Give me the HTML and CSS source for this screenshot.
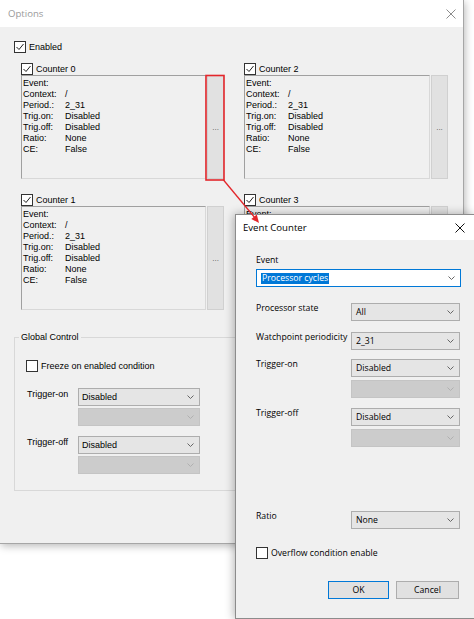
FILE: index.html
```html
<!DOCTYPE html>
<html>
<head>
<meta charset="utf-8">
<link rel="stylesheet" href="styles.css">
</head>
<body>
<div class="desk">
  <div class="win win-options">
    <div class="titlebar">
      <span class="title inactive">Options</span>
      <svg class="close" width="10" height="10" viewBox="0 0 10 10"><path d="M0.5 0.5 L9.5 9.5 M9.5 0.5 L0.5 9.5" stroke="#8c8c8c" stroke-width="1" fill="none"/></svg>
    </div>
    <div class="opt-body">
      <div class="chk"><span class="box"><svg width="10" height="10" viewBox="0 0 10 10"><polyline points="1.5,5 4,7.5 8.5,2" fill="none" stroke="#222" stroke-width="1"/></svg></span><span>Enabled</span></div>

      <div class="counters">
        <div class="counter">
          <div class="chk"><span class="box"><svg width="10" height="10" viewBox="0 0 10 10"><polyline points="1.5,5 4,7.5 8.5,2" fill="none" stroke="#222" stroke-width="1"/></svg></span><span>Counter 0</span></div>
          <div class="counter-body">
            <div class="info">
              <span>Event:</span><span></span>
              <span>Context:</span><span>/</span>
              <span>Period.:</span><span>2_31</span>
              <span>Trig.on:</span><span>Disabled</span>
              <span>Trig.off:</span><span>Disabled</span>
              <span>Ratio:</span><span>None</span>
              <span>CE:</span><span>False</span>
            </div>
            <div class="dots">...</div>
          </div>
        </div>
        <div class="counter">
          <div class="chk"><span class="box"><svg width="10" height="10" viewBox="0 0 10 10"><polyline points="1.5,5 4,7.5 8.5,2" fill="none" stroke="#222" stroke-width="1"/></svg></span><span>Counter 2</span></div>
          <div class="counter-body">
            <div class="info">
              <span>Event:</span><span></span>
              <span>Context:</span><span>/</span>
              <span>Period.:</span><span>2_31</span>
              <span>Trig.on:</span><span>Disabled</span>
              <span>Trig.off:</span><span>Disabled</span>
              <span>Ratio:</span><span>None</span>
              <span>CE:</span><span>False</span>
            </div>
            <div class="dots">...</div>
          </div>
        </div>
        <div class="counter">
          <div class="chk"><span class="box"><svg width="10" height="10" viewBox="0 0 10 10"><polyline points="1.5,5 4,7.5 8.5,2" fill="none" stroke="#222" stroke-width="1"/></svg></span><span>Counter 1</span></div>
          <div class="counter-body">
            <div class="info">
              <span>Event:</span><span></span>
              <span>Context:</span><span>/</span>
              <span>Period.:</span><span>2_31</span>
              <span>Trig.on:</span><span>Disabled</span>
              <span>Trig.off:</span><span>Disabled</span>
              <span>Ratio:</span><span>None</span>
              <span>CE:</span><span>False</span>
            </div>
            <div class="dots">...</div>
          </div>
        </div>
        <div class="counter">
          <div class="chk"><span class="box"><svg width="10" height="10" viewBox="0 0 10 10"><polyline points="1.5,5 4,7.5 8.5,2" fill="none" stroke="#222" stroke-width="1"/></svg></span><span>Counter 3</span></div>
          <div class="counter-body">
            <div class="info">
              <span>Event:</span><span></span>
            </div>
            <div class="dots"></div>
          </div>
        </div>
      </div>

      <fieldset class="group">
        <legend>Global Control</legend>
        <div class="chk"><span class="box"></span><span>Freeze on enabled condition</span></div>
        <div class="trig-grid">
          <span class="lbl">Trigger-on</span>
          <div class="stack">
            <div class="select"><span>Disabled</span><svg width="7" height="4" viewBox="0 0 7 4"><polyline points="0.5,0.5 3.5,3.5 6.5,0.5" fill="none" stroke="#666" stroke-width="1"/></svg></div>
            <div class="select disabled"><span></span><svg width="7" height="4" viewBox="0 0 7 4"><polyline points="0.5,0.5 3.5,3.5 6.5,0.5" fill="none" stroke="#b0b0b0" stroke-width="1"/></svg></div>
          </div>
          <span class="lbl">Trigger-off</span>
          <div class="stack">
            <div class="select"><span>Disabled</span><svg width="7" height="4" viewBox="0 0 7 4"><polyline points="0.5,0.5 3.5,3.5 6.5,0.5" fill="none" stroke="#666" stroke-width="1"/></svg></div>
            <div class="select disabled"><span></span><svg width="7" height="4" viewBox="0 0 7 4"><polyline points="0.5,0.5 3.5,3.5 6.5,0.5" fill="none" stroke="#b0b0b0" stroke-width="1"/></svg></div>
          </div>
        </div>
      </fieldset>
    </div>
  </div>

  <div class="win win-dialog">
    <div class="titlebar dlg-title">
      <span class="title">Event Counter</span>
      <svg class="close" width="10" height="10" viewBox="0 0 10 10"><path d="M0.5 0.5 L9.5 9.5 M9.5 0.5 L0.5 9.5" stroke="#111" stroke-width="1" fill="none"/></svg>
    </div>
    <div class="dlg-body">
      <span class="dlbl">Event</span>
      <div class="select focus event-sel"><span class="hl">Processor cycles</span><svg width="7" height="4" viewBox="0 0 7 4"><polyline points="0.5,0.5 3.5,3.5 6.5,0.5" fill="none" stroke="#666" stroke-width="1"/></svg></div>

      <div class="drow r-proc">
        <span class="dlbl">Processor state</span>
        <div class="stack"><div class="select"><span>All</span><svg width="7" height="4" viewBox="0 0 7 4"><polyline points="0.5,0.5 3.5,3.5 6.5,0.5" fill="none" stroke="#666" stroke-width="1"/></svg></div></div>
      </div>
      <div class="drow r-watch">
        <span class="dlbl">Watchpoint periodicity</span>
        <div class="stack"><div class="select"><span>2_31</span><svg width="7" height="4" viewBox="0 0 7 4"><polyline points="0.5,0.5 3.5,3.5 6.5,0.5" fill="none" stroke="#666" stroke-width="1"/></svg></div></div>
      </div>
      <div class="drow r-ton">
        <span class="dlbl">Trigger-on</span>
        <div class="stack dstack">
          <div class="select"><span>Disabled</span><svg width="7" height="4" viewBox="0 0 7 4"><polyline points="0.5,0.5 3.5,3.5 6.5,0.5" fill="none" stroke="#666" stroke-width="1"/></svg></div>
          <div class="select disabled"><span></span><svg width="7" height="4" viewBox="0 0 7 4"><polyline points="0.5,0.5 3.5,3.5 6.5,0.5" fill="none" stroke="#b0b0b0" stroke-width="1"/></svg></div>
        </div>
      </div>
      <div class="drow r-toff">
        <span class="dlbl">Trigger-off</span>
        <div class="stack dstack">
          <div class="select"><span>Disabled</span><svg width="7" height="4" viewBox="0 0 7 4"><polyline points="0.5,0.5 3.5,3.5 6.5,0.5" fill="none" stroke="#666" stroke-width="1"/></svg></div>
          <div class="select disabled"><span></span><svg width="7" height="4" viewBox="0 0 7 4"><polyline points="0.5,0.5 3.5,3.5 6.5,0.5" fill="none" stroke="#b0b0b0" stroke-width="1"/></svg></div>
        </div>
      </div>
      <div class="drow r-ratio">
        <span class="dlbl">Ratio</span>
        <div class="stack"><div class="select"><span>None</span><svg width="7" height="4" viewBox="0 0 7 4"><polyline points="0.5,0.5 3.5,3.5 6.5,0.5" fill="none" stroke="#666" stroke-width="1"/></svg></div></div>
      </div>

      <div class="chk dchk"><span class="box"></span><span>Overflow condition enable</span></div>

      <div class="buttons">
        <div class="btn default">OK</div>
        <div class="btn">Cancel</div>
      </div>
    </div>
  </div>

  <svg class="annot" width="474" height="619" viewBox="0 0 474 619">
    <rect x="206" y="75.5" width="18" height="104.5" fill="none" stroke="#e3262b" stroke-width="1.6"/>
    <line x1="223.5" y1="180" x2="255.5" y2="218.5" stroke="#e3262b" stroke-width="1.3"/>
    <polygon points="259,223 251.3,218.9 256.8,214.5" fill="#e3262b"/>
  </svg>
</div>
</body>
</html>
```

FILE: styles.css
```css
html, body {
  margin: 0;
  padding: 0;
}
body {
  width: 474px;
  height: 619px;
  overflow: hidden;
  background: #ffffff;
  font-family: "Liberation Sans", Arial, sans-serif;
  font-size: 9px;
  color: #000;
}
.desk {
  position: relative;
  width: 474px;
  height: 619px;
  overflow: hidden;
}
.win {
  position: absolute;
  background: #f0f0f0;
  box-sizing: border-box;
}
.win-options {
  left: 0;
  top: 0;
  width: 464px;
  height: 544px;
  border-right: 1px solid #a6a6a6;
  border-bottom: 1px solid #a6a6a6;
  box-shadow: 1px 2px 8px rgba(0, 0, 0, 0.28);
}
.titlebar {
  background: #ffffff;
  display: flex;
  align-items: center;
  justify-content: space-between;
  box-sizing: border-box;
}
.win-options .titlebar {
  height: 27px;
  padding: 0 7px 0 8px;
}
.title {
  font-family: "Open Sans", "Noto Sans", sans-serif;
  font-size: 9.6px;
  color: #000;
}
.title.inactive {
  color: #9a9a9a;
}
.close {
  display: block;
}

/* options body */
.opt-body {
  padding: 14px 0 0 14px;
}
.chk {
  display: flex;
  align-items: center;
  gap: 3px;
  height: 12px;
}
.box {
  width: 12px;
  height: 12px;
  box-sizing: border-box;
  border: 1px solid #333333;
  background: #ffffff;
  display: flex;
  align-items: center;
  justify-content: center;
  flex: none;
}
.counters {
  margin: 10px 0 0 7px;
  display: grid;
  grid-template-columns: 203px 205px;
  column-gap: 20px;
  row-gap: 15px;
}
.counter-body {
  display: flex;
  gap: 1px;
  height: 104px;
}
.info {
  width: 186px;
  box-sizing: border-box;
  border: 1px solid #a0a0a0;
  border-right-color: #d8d8d8;
  border-bottom-color: #d8d8d8;
  background: #f0f0f0;
  padding: 2px 0 0 1px;
  display: grid;
  grid-template-columns: 42px 1fr;
  grid-auto-rows: 11px;
  line-height: 11px;
  align-content: start;
}
.dots {
  width: 17px;
  box-sizing: border-box;
  background: #e1e1e1;
  border: 1px solid #d0d0d0;
  display: flex;
  align-items: center;
  justify-content: center;
  color: #555;
  font-size: 8px;
}

/* group */
.group {
  margin: 21px 0 0 0;
  width: 436px;
  height: 160px;
  box-sizing: border-box;
  border: 1px solid #d8d8d8;
  padding: 17px 0 0 11px;
}
.group legend {
  padding: 0 2px;
  margin-left: -7px;
  line-height: 12px;
  font-size: 9px;
}
.trig-grid {
  margin-top: 16px;
  display: grid;
  grid-template-columns: 52px 122px;
  row-gap: 10px;
  align-items: start;
}
.lbl {
  line-height: 12px;
  padding-left: 1px;
}
.stack {
  display: flex;
  flex-direction: column;
  gap: 2px;
}
.select {
  height: 18px;
  box-sizing: border-box;
  border: 1px solid #adadad;
  background: #e5e5e5;
  display: flex;
  align-items: center;
  justify-content: space-between;
  padding: 0 5px 0 3px;
}
.select svg {
  display: block;
  flex: none;
}
.select.disabled {
  background: #cccccc;
  border-color: #c4c4c4;
}

/* dialog */
.win-dialog {
  left: 235px;
  top: 214px;
  width: 239px;
  height: 405px;
  border: 1px solid #8c8c8c;
  border-right: none;
  box-shadow: -1px 0 9px rgba(0, 0, 0, 0.3);
  font-family: "Open Sans", "Noto Sans", sans-serif;
  font-size: 8.7px;
}
.dlg-title {
  height: 25px;
  padding: 0 9px 0 7px;
}
.dlg-body {
  padding: 14px 12px 0 20px;
  display: flex;
  flex-direction: column;
}
.dlbl {
  line-height: 13px;
  display: block;
}
.event-sel {
  margin-top: 2px;
  width: 205px;
}
.select.focus {
  background: #ffffff;
  border-color: #0078d7;
}
.hl {
  background: #0078d7;
  color: #ffffff;
  padding: 0 1px;
  line-height: 11px;
}
.win-dialog .select {
  padding-left: 4px;
}
.drow {
  display: grid;
  grid-template-columns: 95px 109px;
  align-items: start;
}
.drow .dlbl {
  margin-top: -1px;
}
.dstack {
  gap: 3px;
}
.r-proc { margin-top: 16px; }
.r-watch { margin-top: 11px; }
.r-ton { margin-top: 9px; }
.r-toff { margin-top: 10px; }
.r-ratio { margin-top: 64px; }
.dchk {
  margin-top: 18px;
}
.buttons {
  margin-top: 22px;
  display: flex;
  justify-content: flex-end;
  gap: 7px;
  padding-right: 3px;
}
.btn {
  height: 18px;
  width: 63px;
  box-sizing: border-box;
  border: 1px solid #adadad;
  background: #e1e1e1;
  display: flex;
  align-items: center;
  justify-content: center;
}
.btn.default {
  width: 61px;
  border-color: #0078d7;
}

.annot {
  position: absolute;
  left: 0;
  top: 0;
  pointer-events: none;
}
```
